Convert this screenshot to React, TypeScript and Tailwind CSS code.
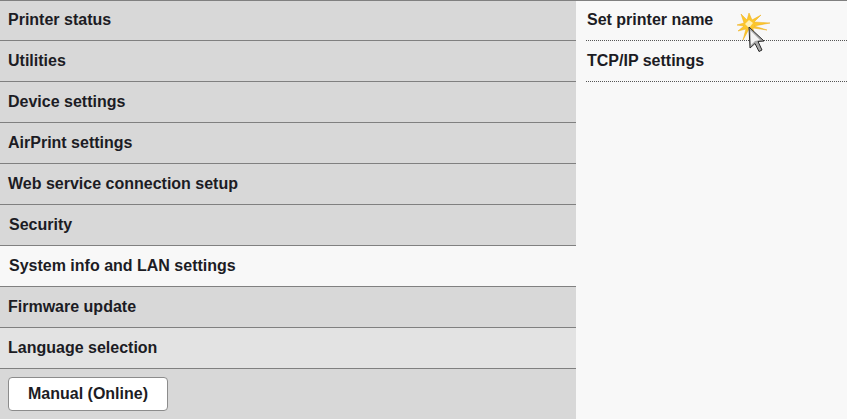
import React from "react";

const menu = [
  { label: "Printer status" },
  { label: "Utilities" },
  { label: "Device settings" },
  { label: "AirPrint settings" },
  { label: "Web service connection setup" },
  { label: "Security", inset: true },
  { label: "System info and LAN settings", active: true, inset: true },
  { label: "Firmware update" },
  { label: "Language selection", light: true },
];

const subMenu = ["Set printer name", "TCP/IP settings"];

const CursorSpark = () => (
  <svg width="40" height="48" viewBox="0 0 40 48" className="absolute left-[734px] top-[8px]">
    <polygon
      points="7,6 13,12 15,5 18,12 27,7 20,14 36,15 20,18 33,22 19,20 20,27 15,21 9,32 12,21 4,23 10,18 3,17 10,15"
      fill="#fcc72c"
      stroke="#eead17"
      strokeWidth="0.5"
    />
    <polygon points="11,16 15,12 19,15 15,20" fill="#fff2b5" />
    <path
      d="M15 19 L16 40 L21 35.5 L25 43.5 L28 42 L24 33.5 L30 33 Z"
      fill="#a8a8a8"
      stroke="#2a2a2a"
      strokeWidth="1"
      strokeLinejoin="round"
    />
    <path d="M16.5 22.5 L17 37 L21 33 L26 32 Z" fill="#f4f4f4" />
  </svg>
);

export default function App() {
  return (
    <div className="relative flex h-[419px] w-[847px] overflow-hidden bg-[#f8f8f8] font-['Liberation_Sans',Arial,sans-serif] text-[16px] font-bold text-[#1c1c24]">
      <div className="flex w-[576px] flex-col bg-[#d8d8d8]">
        {menu.map((item, i) => (
          <div
            key={item.label}
            className={`flex h-[41px] shrink-0 items-center border-b border-[#808080] pb-px ${
              i === 0 ? "border-t" : ""
            } ${item.inset ? "pl-[9px]" : "pl-2"} ${
              item.active ? "bg-[#f8f8f8]" : item.light ? "bg-[#e3e3e3]" : "bg-[#d8d8d8]"
            }`}
          >
            {item.label}
          </div>
        ))}
        <div className="pl-2 pt-2">
          <div className="flex h-[34px] w-[160px] items-center justify-center rounded-[4px] border border-[#8c8c8c] bg-white">
            Manual (Online)
          </div>
        </div>
      </div>
      <div className="flex-1 pl-[10px]">
        <div className="h-px bg-[#808080] -ml-[10px]" />
        {subMenu.map((label, i) => (
          <div
            key={label}
            className={`flex items-center border-b border-dotted border-[#555555] pl-px ${
              i === 0 ? "h-[40px] pb-[2px]" : "h-[41px]"
            }`}
          >
            {label}
          </div>
        ))}
      </div>
      <CursorSpark />
    </div>
  );
}
